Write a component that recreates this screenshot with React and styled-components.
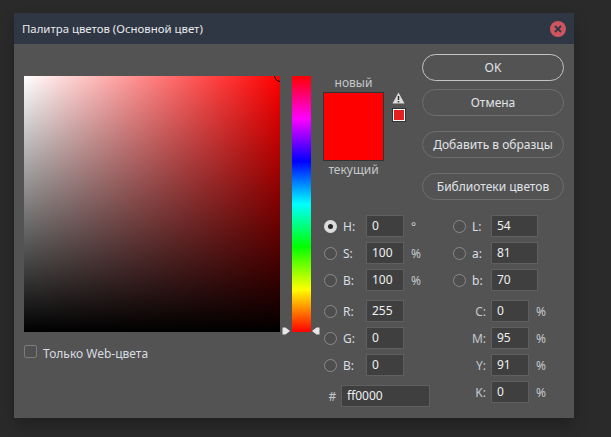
import React from "react";
import styled, { createGlobalStyle } from "styled-components";

const GlobalStyle = createGlobalStyle`
  html, body {
    margin: 0;
    padding: 0;
    background: #282828;
  }
  * {
    box-sizing: border-box;
  }
`;

const Screen = styled.div`
  width: 611px;
  height: 437px;
  overflow: hidden;
  padding: 13px 37px 19px 14px;
  background: #2a2a2a;
  font-family: "Noto Sans", "Open Sans", sans-serif;
  font-size: 12px;
  color: #d8dde2;
`;

const Dialog = styled.div`
  width: 560px;
  height: 405px;
  display: flex;
  flex-direction: column;
  background: #535353;
  box-shadow: 0 8px 14px rgba(0, 0, 0, 0.22);
`;

const TitleBar = styled.div`
  height: 31px;
  flex: none;
  display: flex;
  align-items: center;
  justify-content: space-between;
  padding: 0 8px;
  background: #2f3644;
  color: #e8eaed;
  font-size: 11.4px;
`;

const CloseButton = styled.div`
  width: 16px;
  height: 16px;
  border-radius: 50%;
  background: #cd555f;
  display: flex;
  align-items: center;
  justify-content: center;
`;

const Body = styled.div`
  flex: 1;
  display: flex;
  padding: 10px 10px 0;
`;

const LeftCol = styled.div`
  width: 256px;
  padding-top: 22px;
  flex: none;
`;

const Field = styled.div`
  position: relative;
  width: 256px;
  height: 256px;
  overflow: hidden;
  background:
    linear-gradient(to bottom, rgba(0, 0, 0, 0), #000),
    linear-gradient(to right, #fff, #f00);
`;

const FieldMarker = styled.div`
  position: absolute;
  top: -7px;
  right: -7px;
  width: 13px;
  height: 13px;
  border-radius: 50%;
  border: 1.5px solid #000;
`;

const WebOnly = styled.label`
  display: flex;
  align-items: flex-start;
  gap: 6px;
  margin-top: 13px;
`;

const CheckBox = styled.span`
  width: 13px;
  height: 13px;
  border: 1px solid #7c7c7c;
  border-radius: 2px;
  background: #505050;
`;

const HueCol = styled.div`
  position: relative;
  width: 19px;
  height: 256px;
  flex: none;
  margin: 22px 12px 0 12px;
  background: linear-gradient(
    to bottom,
    #f00 0%,
    #f0f 16.67%,
    #00f 33.33%,
    #0ff 50%,
    #0f0 66.67%,
    #ff0 83.33%,
    #f00 100%
  );
`;

const HueArrow = styled.svg`
  position: absolute;
  bottom: -3px;
  width: 8px;
  height: 8px;
  ${(p) => (p.$side === "left" ? "left: -10px;" : "right: -9px;")}
`;

const RightCol = styled.div`
  flex: 1;
  display: flex;
  flex-direction: column;
`;

const TopRow = styled.div`
  display: flex;
  height: 161px;
  flex: none;
`;

const Preview = styled.div`
  width: 99px;
  flex: none;
  padding-top: 20px;
  display: flex;
  flex-direction: row;
`;

const SwatchStack = styled.div`
  width: 61px;
  display: flex;
  flex-direction: column;
  align-items: center;
  color: #c4c8cc;
`;

const Caption = styled.div`
  height: 18px;
  line-height: 18px;
`;

const Swatch = styled.div`
  width: 61px;
  height: 69px;
  background: #ff0000;
  border: 1px solid #333333;
`;

const GamutCol = styled.div`
  margin-left: 8px;
  margin-top: 18px;
  display: flex;
  flex-direction: column;
  gap: 4px;
`;

const GamutChip = styled.div`
  width: 14px;
  height: 14px;
  background: #e62020;
  border: 1px solid #333333;
  box-shadow: inset 0 0 0 1px #ffffff;
`;

const Buttons = styled.div`
  display: flex;
  flex-direction: column;
  width: 142px;
`;

const Button = styled.div`
  height: 27px;
  margin-bottom: ${(p) => p.$gap}px;
  border-radius: 14px;
  border: ${(p) => (p.$primary ? "1.5px solid #c4c4c4" : "1px solid #6e6e6e")};
  display: flex;
  align-items: center;
  justify-content: center;
  color: #e0e4e8;
`;

const Form = styled.div`
  display: flex;
`;

const FormCol = styled.div`
  width: 129px;
  flex: none;
  padding-left: 1px;
`;

const Group = styled.div`
  display: flex;
  flex-direction: column;
  gap: 5px;
  margin-bottom: 9px;
`;

const Row = styled.div`
  display: flex;
  align-items: center;
  height: 22px;
`;

const Radio = styled.span`
  width: 13px;
  height: 13px;
  flex: none;
  border-radius: 50%;
  border: 1px solid #8a8a8a;
  background: #4e4e4e;
  ${(p) =>
    p.$checked &&
    `
    background: #262626;
    border: 4px solid #dcdcdc;
  `}
`;

const Label = styled.span`
  width: ${(p) => p.$w}px;
  flex: none;
  padding-left: 6px;
`;

const CmykLabel = styled.span`
  width: 38px;
  flex: none;
  padding-right: 5px;
  text-align: right;
  color: #c4c8cc;
`;

const Input = styled.div`
  width: ${(p) => p.$w}px;
  height: 22px;
  flex: none;
  background: #3f3f3f;
  border: 1px solid #5f5f5f;
  padding-left: 5px;
  line-height: 20px;
  color: #eef0f2;
`;

const Unit = styled.span`
  margin-left: 7px;
  color: #c4c8cc;
`;

const HexMark = styled.span`
  width: 17px;
  flex: none;
  text-align: center;
  color: #c4c8cc;
`;

const ColorRow = ({ checked, label, value, unit, w = 38, labelW = 29 }) => (
  <Row>
    <Radio $checked={checked} />
    <Label $w={labelW}>{label}</Label>
    <Input $w={w}>{value}</Input>
    {unit && <Unit>{unit}</Unit>}
  </Row>
);

const CmykRow = ({ label, value }) => (
  <Row>
    <CmykLabel>{label}</CmykLabel>
    <Input $w={38}>{value}</Input>
    <Unit>%</Unit>
  </Row>
);

export default function App() {
  return (
    <Screen>
      <GlobalStyle />
      <Dialog>
        <TitleBar>
          <span>Палитра цветов (Основной цвет)</span>
          <CloseButton>
            <svg width="8" height="8" viewBox="0 0 8 8">
              <path d="M1 1 L7 7 M7 1 L1 7" stroke="#2f3644" strokeWidth="1.8" />
            </svg>
          </CloseButton>
        </TitleBar>
        <Body>
          <LeftCol>
            <Field>
              <FieldMarker />
            </Field>
            <WebOnly>
              <CheckBox />
              Только Web-цвета
            </WebOnly>
          </LeftCol>
          <HueCol>
            <HueArrow $side="left" viewBox="0 0 8 8">
              <path d="M0.5 1 Q0.5 0.5 1 0.5 H3.5 L8 4 L3.5 7.5 H1 Q0.5 7.5 0.5 7 Z" fill="#e6e6e6" />
            </HueArrow>
            <HueArrow $side="right" viewBox="0 0 8 8">
              <path d="M7.5 1 Q7.5 0.5 7 0.5 H4.5 L0 4 L4.5 7.5 H7 Q7.5 7.5 7.5 7 Z" fill="#e6e6e6" />
            </HueArrow>
          </HueCol>
          <RightCol>
            <TopRow>
              <Preview>
                <SwatchStack>
                  <Caption>новый</Caption>
                  <Swatch />
                  <Caption>текущий</Caption>
                </SwatchStack>
                <GamutCol>
                  <svg width="13" height="12" viewBox="0 0 13 12">
                    <path d="M6.5 0.5 L12.5 11.5 H0.5 Z" fill="#dcdcdc" />
                    <path d="M6.5 4 V8 M6.5 9 V10.5" stroke="#333" strokeWidth="1.5" />
                  </svg>
                  <GamutChip />
                </GamutCol>
              </Preview>
              <Buttons>
                <Button $primary $gap={8}>OK</Button>
                <Button $gap={15}>Отмена</Button>
                <Button $gap={15}>Добавить в образцы</Button>
                <Button $gap={0}>Библиотеки цветов</Button>
              </Buttons>
            </TopRow>
            <Form>
              <FormCol>
                <Group>
                  <ColorRow checked label="H:" value="0" unit="°" />
                  <ColorRow label="S:" value="100" unit="%" />
                  <ColorRow label="B:" value="100" unit="%" />
                </Group>
                <Group>
                  <ColorRow label="R:" value="255" />
                  <ColorRow label="G:" value="0" />
                  <ColorRow label="B:" value="0" />
                </Group>
                <Row>
                  <HexMark>#</HexMark>
                  <Input $w={89}>ff0000</Input>
                </Row>
              </FormCol>
              <FormCol>
                <Group>
                  <ColorRow label="L:" value="54" w={47} labelW={25} />
                  <ColorRow label="a:" value="81" w={47} labelW={25} />
                  <ColorRow label="b:" value="70" w={47} labelW={25} />
                </Group>
                <Group>
                  <CmykRow label="C:" value="0" />
                  <CmykRow label="M:" value="95" />
                  <CmykRow label="Y:" value="91" />
                  <CmykRow label="K:" value="0" />
                </Group>
              </FormCol>
            </Form>
          </RightCol>
        </Body>
      </Dialog>
    </Screen>
  );
}
